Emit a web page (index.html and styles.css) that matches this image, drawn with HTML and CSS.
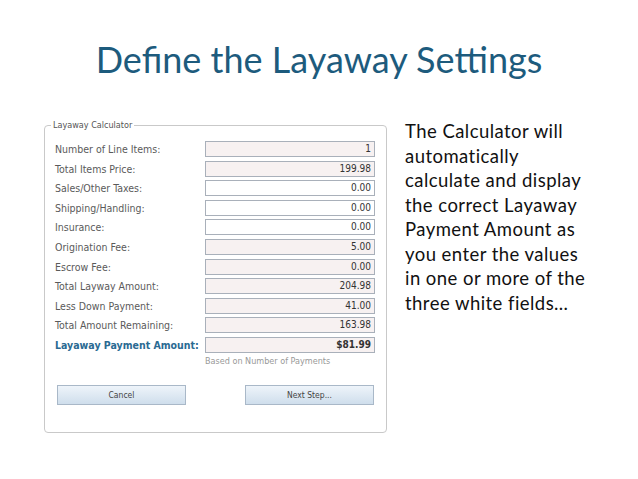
FILE: index.html
```html
<!DOCTYPE html>
<html>
<head>
<meta charset="utf-8">
<link rel="stylesheet" href="styles.css">
</head>
<body>
<h1 class="title">Define the Layaway Settings</h1>
<div class="main">
  <fieldset class="calc">
    <legend class="calc-legend">Layaway Calculator</legend>
    <div class="grid">
      <div class="label">Number of Line Items:</div><div class="field ro">1</div>
      <div class="label">Total Items Price:</div><div class="field ro">199.98</div>
      <div class="label">Sales/Other Taxes:</div><div class="field">0.00</div>
      <div class="label">Shipping/Handling:</div><div class="field">0.00</div>
      <div class="label">Insurance:</div><div class="field">0.00</div>
      <div class="label">Origination Fee:</div><div class="field ro">5.00</div>
      <div class="label">Escrow Fee:</div><div class="field ro">0.00</div>
      <div class="label">Total Layway Amount:</div><div class="field ro">204.98</div>
      <div class="label">Less Down Payment:</div><div class="field ro">41.00</div>
      <div class="label">Total Amount Remaining:</div><div class="field ro">163.98</div>
      <div class="label strong">Layaway Payment Amount:</div><div class="field ro bold">$81.99</div>
    </div>
    <div class="note">Based on Number of Payments</div>
    <div class="buttons">
      <div class="btn">Cancel</div>
      <div class="btn">Next Step...</div>
    </div>
  </fieldset>
  <p class="desc">The Calculator will<br>automatically<br>calculate and display<br>the correct Layaway<br>Payment Amount as<br>you enter the values<br>in one or more of the<br>three white fields…</p>
</div>
</body>
</html>
```
FILE: styles.css
```css
html, body {
  margin: 0;
  padding: 0;
  background: #ffffff;
}
body {
  width: 638px;
  height: 479px;
  overflow: hidden;
  font-family: "Lato", "Open Sans", sans-serif;
}
.title {
  margin: 0;
  padding-top: 31px;
  height: 56px;
  line-height: 56px;
  text-align: center;
  font-weight: 400;
  font-size: 36px;
  color: #1d5b7d;
}
.main {
  display: flex;
  align-items: flex-start;
  margin-top: 33px;
}
.calc {
  box-sizing: border-box;
  width: 343px;
  height: 313px;
  margin: 0 0 0 44px;
  padding: 11px 11px 0 10px;
  border: 1px solid #c9c9c9;
  border-radius: 4px;
  font-family: "DejaVu Sans Condensed", "DejaVu Sans", sans-serif;
}
.calc-legend {
  margin-left: -4px;
  padding: 0 2px;
  font-size: 9px;
  line-height: 10px;
  color: #555;
}
.grid {
  display: grid;
  grid-template-columns: 150px 170px;
  grid-auto-rows: 16px;
  row-gap: 3.6px;
}
.label {
  font-size: 10.5px;
  line-height: 16px;
  color: #5a5a5a;
  white-space: nowrap;
}
.label.strong {
  font-weight: bold;
  font-size: 10.5px;
  color: #2a6a92;
}
.field {
  box-sizing: border-box;
  border: 1px solid #a9b0ba;
  background: #ffffff;
  text-align: right;
  padding-right: 3px;
  font-size: 10px;
  line-height: 14px;
  color: #333;
}
.field.ro {
  background: #f7f1f1;
}
.field.bold {
  font-weight: bold;
  font-size: 10px;
}
.note {
  margin-left: 150px;
  margin-top: 2px;
  font-size: 9px;
  line-height: 12px;
  color: #999;
}
.buttons {
  display: flex;
  justify-content: space-between;
  margin: 18px 1px 0 2px;
}
.btn {
  box-sizing: border-box;
  width: 129px;
  height: 20px;
  border: 1px solid #a9b8c8;
  background: linear-gradient(#eef4fa, #cfdeec);
  text-align: center;
  font-size: 8.5px;
  line-height: 18px;
  color: #444;
}
.desc {
  margin: -1px 0 0 18px;
  font-family: "Lato", "Open Sans", sans-serif;
  font-size: 18.5px;
  letter-spacing: 0.45px;
  line-height: 24.5px;
  color: #111;
}
```
